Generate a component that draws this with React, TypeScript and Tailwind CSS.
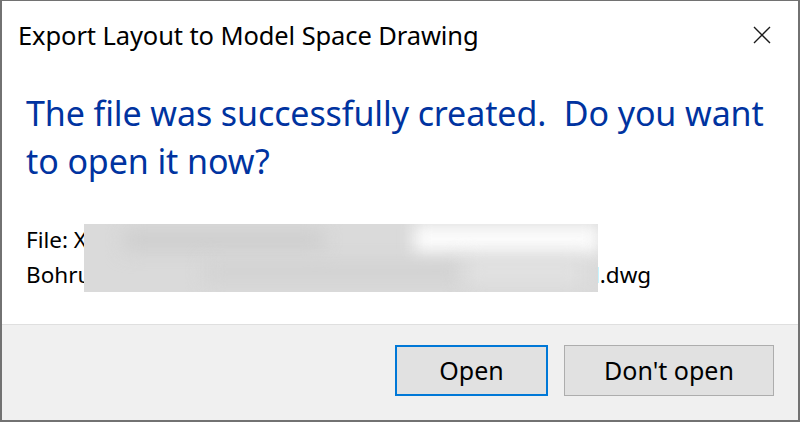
export default function App() {
  return (
    <div
      className="w-[800px] h-[422px] flex flex-col bg-white border-l-2 border-t border-r-2 border-b-2 border-[#727272] overflow-hidden"
      style={{ fontFamily: '"Noto Sans", "Open Sans", sans-serif' }}
    >
      <div className="flex-1 flex flex-col">
        <div className="flex items-center justify-between h-[68px] pl-[16px] pr-[26px]">
          <span className="text-[25.5px] text-black tracking-[-0.1px]">
            Export Layout to Model Space Drawing
          </span>
          <svg width="20" height="20" viewBox="0 0 20 20" className="text-[#1a1a1a]">
            <path d="M2 2 L18 18 M18 2 L2 18" stroke="currentColor" strokeWidth="1.4" fill="none" />
          </svg>
        </div>
        <div className="pl-[24px] pr-[10px] pt-[20px] text-[34px] leading-[48px] text-[#0033a0] tracking-[-0.1px]">
          <p>The file was successfully created.&nbsp; Do you want</p>
          <p>to open it now?</p>
        </div>
        <div className="relative mt-[37px] pl-[24px] text-[22.5px] leading-[35px] text-black">
          <p>File: X</p>
          <p className="flex">
            <span className="w-[568px]">Bohru</span>
            <span className="text-[#1a56b0]">l</span>
            <span>.dwg</span>
          </p>
          <div className="absolute left-[82px] top-[2px] w-[514px] h-[68px] overflow-hidden">
            <div className="absolute inset-0 bg-[#dadada]" />
            <div className="absolute left-[330px] top-0 w-[186px] h-[30px] bg-[#fbfbfb] blur-[8px]" />
            <div className="absolute left-[40px] top-[6px] w-[200px] h-[20px] bg-[#cdcdcd] blur-[10px]" />
            <div className="absolute left-[120px] top-[38px] w-[260px] h-[20px] bg-[#d2d2d2] blur-[10px]" />
            <div className="absolute left-[380px] top-[36px] w-[120px] h-[24px] bg-[#e2e2e2] blur-[10px]" />
          </div>
        </div>
      </div>
      <div className="h-[96px] shrink-0 bg-[#f0f0f0] border-t border-[#dfdfdf] flex items-start justify-end gap-[16px] pt-[20px] pr-[24px]">
        <button className="w-[153px] h-[51px] bg-[#e1e1e1] border-2 border-[#0078d7] text-[25px] text-black">
          Open
        </button>
        <button className="w-[210px] h-[51px] bg-[#e1e1e1] border border-[#adadad] text-[25px] text-black">
          Don't open
        </button>
      </div>
    </div>
  );
}
